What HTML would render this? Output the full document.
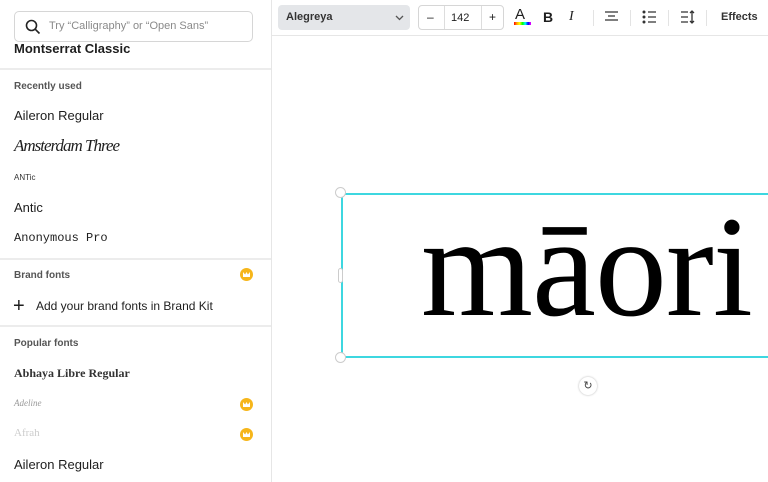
<!DOCTYPE html>
<html><head><meta charset="utf-8"><style>
*{margin:0;padding:0;box-sizing:border-box}
body{width:768px;height:482px;overflow:hidden;background:#fff;font-family:"Liberation Sans",sans-serif;position:relative;color:#1e1e1e}
.side{position:absolute;left:0;top:0;width:272px;height:482px;border-right:1px solid #e6e6e6}
.a{position:absolute;white-space:nowrap}
.search{left:14px;top:11px;width:239px;height:31px;border:1px solid #d6d6d6;border-radius:5px}
.hr{position:absolute;left:0;width:271px;height:2px;background:#ececec}
.lbl{font-size:10px;color:#555;font-weight:bold}
.f{font-size:13px;color:#1e1e1e}
.crown{position:absolute;width:13px;height:13px;border-radius:50%;background:#f6b61b}
.crown:after{content:"";position:absolute;left:3px;top:4px;width:7px;height:5px;background:#fff;clip-path:polygon(0 0,30% 50%,50% 0,70% 50%,100% 0,100% 100%,0 100%)}
.tb{position:absolute;left:272px;top:0;width:496px;height:36px;border-bottom:1px solid #e6e6e6}
.sep{position:absolute;top:10px;width:1px;height:16px;background:#e3e3e3}
</style></head><body>
<div class="side">
<div class="a search"><svg style="position:absolute;left:10px;top:7px" width="16" height="16" viewBox="0 0 16 16"><circle cx="6.5" cy="6.5" r="5" fill="none" stroke="#222" stroke-width="1.6"/><line x1="10.2" y1="10.2" x2="14.5" y2="14.5" stroke="#222" stroke-width="1.6"/></svg><span class="a" style="left:34px;top:8px;font-size:11px;color:#8a8a8a">Try “Calligraphy” or “Open Sans”</span></div>
<div class="a" style="left:14px;top:41px;font-size:13px;font-weight:bold">Montserrat Classic</div>
<div class="hr" style="top:68px"></div>
<div class="a lbl" style="left:14px;top:81px">Recently used</div>
<div class="a f" style="left:14px;top:108px">Aileron Regular</div>
<div class="a" style="left:14px;top:136px;font-family:'Liberation Serif',serif;font-style:italic;font-size:17px;letter-spacing:-1px">Amsterdam Three</div>
<div class="a" style="left:14px;top:173px;font-size:8px;color:#333">ANTic</div>
<div class="a f" style="left:14px;top:200px">Antic</div>
<div class="a f" style="left:14px;top:231px;font-family:'Liberation Mono',monospace;font-size:12px">Anonymous Pro</div>
<div class="hr" style="top:258px"></div>
<div class="a lbl" style="left:14px;top:270px">Brand fonts</div>
<div class="crown" style="left:240px;top:268px"></div>
<div class="a" style="left:13px;top:296px;font-size:20px;font-weight:300;line-height:20px">+</div>
<div class="a f" style="left:36px;top:299px;font-size:12px">Add your brand fonts in Brand Kit</div>
<div class="hr" style="top:325px"></div>
<div class="a lbl" style="left:14px;top:338px">Popular fonts</div>
<div class="a" style="left:14px;top:366px;font-family:'Liberation Serif',serif;font-size:12px;font-weight:bold;color:#333">Abhaya Libre Regular</div>
<div class="a" style="left:14px;top:398px;font-family:'Liberation Serif',serif;font-style:italic;font-size:9px;color:#999">Adeline</div>
<div class="crown" style="left:240px;top:398px"></div>
<div class="a" style="left:14px;top:427px;font-family:'Liberation Serif',serif;font-size:11px;color:#ccc">Afrah</div>
<div class="crown" style="left:240px;top:428px"></div>
<div class="a f" style="left:14px;top:457px">Aileron Regular</div>
</div>
<div class="tb">
<div class="a" style="left:6px;top:5px;width:132px;height:25px;background:#e4e6e9;border-radius:4px"><span class="a" style="left:8px;top:6px;font-size:11px;font-weight:bold;color:#333">Alegreya</span><svg class="a" style="left:117px;top:10px" width="9" height="6"><path d="M1 1l3.5 3.5L8 1" fill="none" stroke="#555" stroke-width="1.3"/></svg></div>
<div class="a" style="left:146px;top:5px;width:86px;height:25px;border:1px solid #d6d6d6;border-radius:4px"><span class="a" style="left:8px;top:4px;font-size:12px">–</span><div class="a" style="left:25px;top:0;width:1px;height:23px;background:#ddd"></div><span class="a" style="left:32px;top:6px;font-size:11px">142</span><div class="a" style="left:62px;top:0;width:1px;height:23px;background:#ddd"></div><span class="a" style="left:70px;top:4px;font-size:12px">+</span></div>
<span class="a" style="left:243px;top:6px;font-size:15px">A</span><div class="a" style="left:242px;top:22px;width:17px;height:3px;background:linear-gradient(90deg,red,orange,yellow,lime,cyan,blue,magenta)"></div>
<span class="a" style="left:271px;top:9px;font-size:14px;font-weight:bold">B</span>
<span class="a" style="left:297px;top:9px;font-size:14px;font-style:italic;font-family:'Liberation Serif',serif">I</span>
<div class="sep" style="left:321px"></div>
<svg class="a" style="left:332px;top:11px" width="15" height="12"><path d="M1 1h13M4 5h7M1 9h13" stroke="#333" stroke-width="1.3"/></svg>
<div class="sep" style="left:358px"></div>
<svg class="a" style="left:370px;top:10px" width="14" height="14"><g fill="#333"><circle cx="2" cy="2" r="1.5"/><circle cx="2" cy="7" r="1.5"/><circle cx="2" cy="12" r="1.5"/></g><path d="M6 2h8M6 7h8M6 12h8" stroke="#333" stroke-width="1.3"/></svg>
<div class="sep" style="left:396px"></div>
<svg class="a" style="left:408px;top:10px" width="16" height="14"><path d="M1 2h7M1 7h7M1 12h7M12 1v12M10 3l2-2 2 2M10 11l2 2 2-2" stroke="#333" stroke-width="1.3" fill="none"/></svg>
<div class="sep" style="left:434px"></div>
<span class="a" style="left:449px;top:11px;font-size:11px;font-weight:bold;color:#333">Effects</span>
</div>
<div class="a" style="left:341px;top:193px;width:440px;height:165px;border:2px solid #3dd7e0"></div>
<div class="a" style="left:335px;top:187px;width:11px;height:11px;border-radius:50%;background:#fff;border:1px solid #ccc"></div>
<div class="a" style="left:335px;top:352px;width:11px;height:11px;border-radius:50%;background:#fff;border:1px solid #ccc"></div>
<div class="a" style="left:338px;top:268px;width:5px;height:15px;border-radius:3px;background:#fff;border:1px solid #ccc"></div>
<div class="a" style="left:421px;top:188px;font-family:'Liberation Serif',serif;font-size:144px;line-height:160px;letter-spacing:-1px;color:#000">māori</div>
<div class="a" style="left:579px;top:377px;width:18px;height:18px;border-radius:50%;background:#fff;box-shadow:0 0 2px rgba(0,0,0,.3);font-size:11px;text-align:center;line-height:18px;color:#444">↻</div>
</body></html>
